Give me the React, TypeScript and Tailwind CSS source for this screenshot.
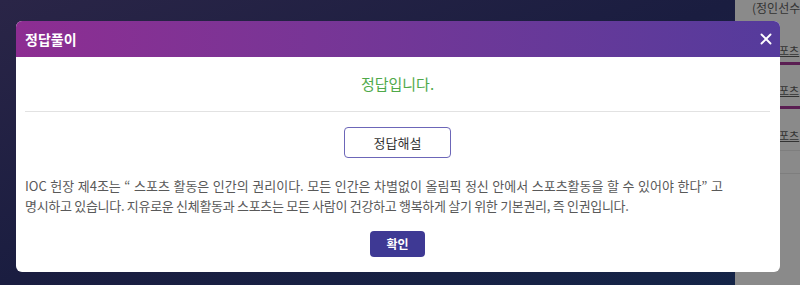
import { X } from "lucide-react";

const font = { fontFamily: '"Noto Sans CJK KR", "Noto Sans", sans-serif' };

export default function App() {
  return (
    <div className="relative w-[800px] h-[285px] overflow-hidden" style={font}>
      {/* page behind the overlay */}
      <div className="flex h-full">
        <div className="flex-1 bg-gradient-to-br from-[#2a2547] via-[#1a1d40] to-[#142447]" />
        <div className="w-[65px] overflow-hidden bg-[#8a8a8a] text-[#333] text-[11px] leading-[14px]">
          <div className="h-[16px] pt-[1px] pl-[17px] whitespace-nowrap text-[12px]">(정인선수</div>
          <div className="mt-[27px] h-[14px] pl-[44px] whitespace-nowrap underline">포츠</div>
          <div className="mt-[5px] h-[3px] bg-[#5a1e52]" />
          <div className="mt-[18px] h-[14px] pl-[44px] whitespace-nowrap underline">포츠</div>
          <div className="mt-[9px] h-[3px] bg-[#5a1e52]" />
          <div className="mt-[19px] h-[14px] pl-[44px] whitespace-nowrap underline">포츠</div>
          <div className="mt-[8px] h-px bg-[#7e7e7e]" />
          <div className="mt-[22px] h-px bg-[#7e7e7e]" />
        </div>
      </div>

      {/* modal */}
      <div className="absolute left-[16px] top-[21px] w-[764px] h-[251px] bg-white rounded-[6px] overflow-hidden flex flex-col">
        <div className="h-[36px] flex items-center justify-between pl-[9px] pr-[5px] bg-gradient-to-r from-[#8d2d92] to-[#553b9c]">
          <span className="text-white text-[14px] font-bold">정답풀이</span>
          <X className="text-white w-[18px] h-[18px]" strokeWidth={2.5} />
        </div>
        <div className="flex flex-col pl-[9px] pr-[10px]">
          <div className="h-[54px] flex items-center justify-center text-[15px] text-[#4fa94a]">정답입니다.</div>
          <div className="h-px bg-[#e2e2e2]" />
          <div className="mt-[15px] flex justify-center">
            <button className="w-[107px] h-[31px] border border-[#6c66b8] rounded-[4px] text-[13px] text-[#333] bg-white">정답해설</button>
          </div>
          <div className="mt-[18px] text-[13px] leading-[20px] text-[#595959]">
            <p className="w-[698px] text-justify [text-align-last:justify]">
              IOC 헌장 제4조는 “ 스포츠 활동은 인간의 권리이다. 모든 인간은 차별없이 올림픽 정신 안에서 스포츠활동을 할 수 있어야 한다” 고
            </p>
            <p className="whitespace-nowrap tracking-[-0.3px]">
              명시하고 있습니다. 지유로운 신체활동과 스포츠는 모든 사람이 건강하고 행복하게 살기 위한 기본권리, 즉 인권입니다.
            </p>
          </div>
          <div className="mt-[15px] flex justify-center">
            <button className="w-[55px] h-[26px] rounded-[4px] bg-[#3e3994] text-white text-[12px] font-bold">확인</button>
          </div>
        </div>
      </div>
    </div>
  );
}
